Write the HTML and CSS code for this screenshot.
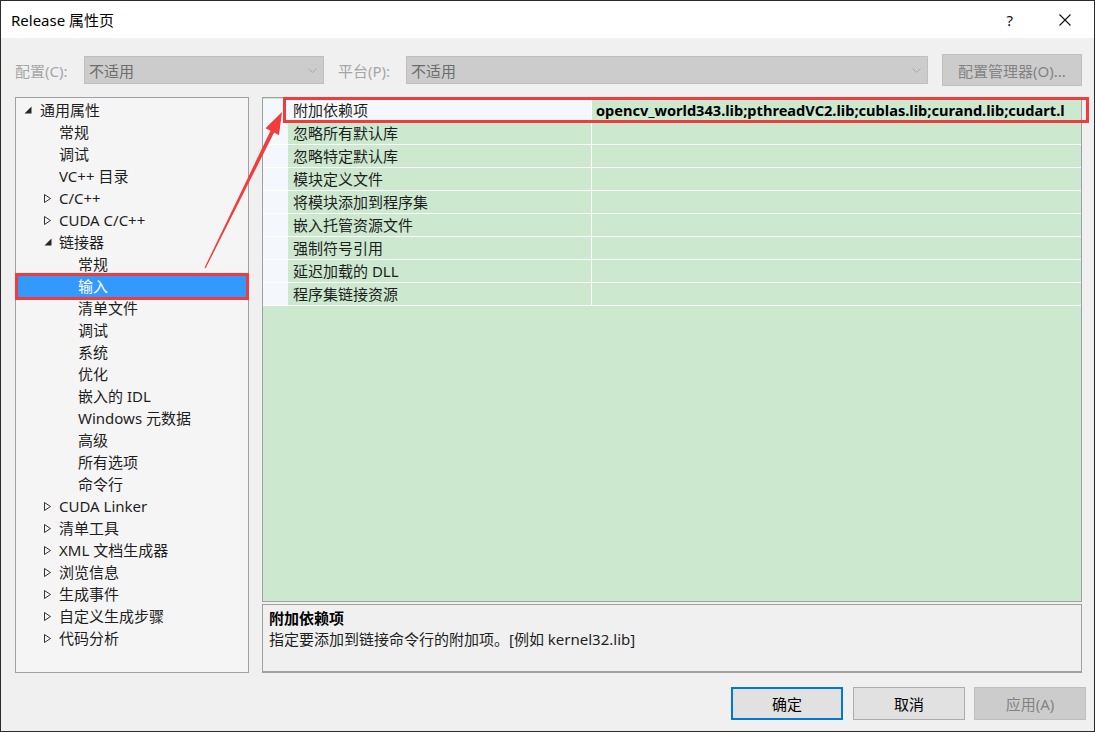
FILE: index.html
```html
<!DOCTYPE html>
<html lang="zh-CN">
<head>
  <meta charset="UTF-8" />
  <title>Release 属性页</title>
  <link rel="stylesheet" href="styles.css">
</head>
<body>
  <div class="window">
    <div class="titlebar">
      <span class="title">Release 属性页</span>
      <span class="help">?</span>
      <svg class="close" width="12" height="12" viewBox="0 0 12 12">
        <path d="M0.5 0.5 L11.5 11.5 M11.5 0.5 L0.5 11.5" stroke="#111" stroke-width="1.1" fill="none" />
      </svg>
    </div>

    <div class="toolbar">
      <span class="tb-label">配置(C):</span>
      <div class="combo combo-config">
        <span>不适用</span>
        <svg width="9" height="5" viewBox="0 0 9 5"><polyline points="0.5,0.5 4.5,4.5 8.5,0.5" stroke="#a8a8a8" fill="none" /></svg>
      </div>
      <span class="tb-label tb-platform">平台(P):</span>
      <div class="combo combo-platform">
        <span>不适用</span>
        <svg width="9" height="5" viewBox="0 0 9 5"><polyline points="0.5,0.5 4.5,4.5 8.5,0.5" stroke="#a8a8a8" fill="none" /></svg>
      </div>
      <button class="btn btn-disabled btn-manager">配置管理器(O)...</button>
    </div>

    <div class="main">
      <div class="tree">
        <div class="node lv0"><svg class="exp" width="16" height="22"><polygon points="0.5,14.5 7.5,7.5 7.5,14.5" fill="#262626" /></svg>通用属性</div>
        <div class="node lv1"><span class="slot"></span>常规</div>
        <div class="node lv1"><span class="slot"></span>调试</div>
        <div class="node lv1"><span class="slot"></span>VC++ 目录</div>
        <div class="node lv1"><svg class="exp" width="16" height="22"><polygon points="1.5,7.5 7.5,11.5 1.5,15.5" fill="none" stroke="#333" /></svg>C/C++</div>
        <div class="node lv1"><svg class="exp" width="16" height="22"><polygon points="1.5,7.5 7.5,11.5 1.5,15.5" fill="none" stroke="#333" /></svg>CUDA C/C++</div>
        <div class="node lv1"><svg class="exp" width="16" height="22"><polygon points="1.5,14.5 8.5,7.5 8.5,14.5" fill="#262626" /></svg>链接器</div>
        <div class="node lv2"><span class="slot"></span>常规</div>
        <div class="node lv2 selected"><span class="slot"></span>输入</div>
        <div class="node lv2"><span class="slot"></span>清单文件</div>
        <div class="node lv2"><span class="slot"></span>调试</div>
        <div class="node lv2"><span class="slot"></span>系统</div>
        <div class="node lv2"><span class="slot"></span>优化</div>
        <div class="node lv2"><span class="slot"></span>嵌入的 IDL</div>
        <div class="node lv2"><span class="slot"></span>Windows 元数据</div>
        <div class="node lv2"><span class="slot"></span>高级</div>
        <div class="node lv2"><span class="slot"></span>所有选项</div>
        <div class="node lv2"><span class="slot"></span>命令行</div>
        <div class="node lv1"><svg class="exp" width="16" height="22"><polygon points="1.5,7.5 7.5,11.5 1.5,15.5" fill="none" stroke="#333" /></svg>CUDA Linker</div>
        <div class="node lv1"><svg class="exp" width="16" height="22"><polygon points="1.5,7.5 7.5,11.5 1.5,15.5" fill="none" stroke="#333" /></svg>清单工具</div>
        <div class="node lv1"><svg class="exp" width="16" height="22"><polygon points="1.5,7.5 7.5,11.5 1.5,15.5" fill="none" stroke="#333" /></svg>XML 文档生成器</div>
        <div class="node lv1"><svg class="exp" width="16" height="22"><polygon points="1.5,7.5 7.5,11.5 1.5,15.5" fill="none" stroke="#333" /></svg>浏览信息</div>
        <div class="node lv1"><svg class="exp" width="16" height="22"><polygon points="1.5,7.5 7.5,11.5 1.5,15.5" fill="none" stroke="#333" /></svg>生成事件</div>
        <div class="node lv1"><svg class="exp" width="16" height="22"><polygon points="1.5,7.5 7.5,11.5 1.5,15.5" fill="none" stroke="#333" /></svg>自定义生成步骤</div>
        <div class="node lv1"><svg class="exp" width="16" height="22"><polygon points="1.5,7.5 7.5,11.5 1.5,15.5" fill="none" stroke="#333" /></svg>代码分析</div>
      </div>

      <div class="right">
        <div class="grid">
          <div class="prop current">
            <span class="gutter"></span>
            <span class="name">附加依赖项</span>
            <span class="value">opencv_world343.lib;pthreadVC2.lib;cublas.lib;curand.lib;cudart.l</span>
          </div>
          <div class="prop"><span class="gutter"></span><span class="name">忽略所有默认库</span><span class="value"></span></div>
          <div class="prop"><span class="gutter"></span><span class="name">忽略特定默认库</span><span class="value"></span></div>
          <div class="prop"><span class="gutter"></span><span class="name">模块定义文件</span><span class="value"></span></div>
          <div class="prop"><span class="gutter"></span><span class="name">将模块添加到程序集</span><span class="value"></span></div>
          <div class="prop"><span class="gutter"></span><span class="name">嵌入托管资源文件</span><span class="value"></span></div>
          <div class="prop"><span class="gutter"></span><span class="name">强制符号引用</span><span class="value"></span></div>
          <div class="prop"><span class="gutter"></span><span class="name">延迟加载的 DLL</span><span class="value"></span></div>
          <div class="prop"><span class="gutter"></span><span class="name">程序集链接资源</span><span class="value"></span></div>
        </div>
        <div class="desc">
          <div class="desc-title">附加依赖项</div>
          <div class="desc-text">指定要添加到链接命令行的附加项。[例如 kernel32.lib]</div>
        </div>
      </div>
    </div>

    <div class="footer">
      <button class="btn btn-default">确定</button>
      <button class="btn btn-cancel">取消</button>
      <button class="btn btn-disabled btn-apply">应用(A)</button>
    </div>
  </div>

  <!-- red annotation marks drawn on top of the screenshot -->
  <div class="mark mark-tree"></div>
  <div class="mark mark-grid"></div>
  <svg class="arrow" width="100" height="180" viewBox="0 0 100 180">
    <polygon points="14.5,167.8 80.5,30.8 75.5,28.2 92,12 89,35.2 84.1,32.6 15.6,168.3" fill="#f23b3b" />
  </svg>
</body>
</html>
```

FILE: styles.css
```css
body {
  margin: 0;
  background-color: #f0f0f0;
  font-family: "Noto Sans", "Noto Sans CJK SC", sans-serif;
  font-size: 15px;
  color: #1e1e1e;
}

.window {
  width: 1095px;
  height: 732px;
  box-sizing: border-box;
  border: 1px solid #2b2b2b;
  background-color: #f0f0f0;
  display: flex;
  flex-direction: column;
}

.titlebar {
  height: 37px;
  flex-shrink: 0;
  background-color: #fff;
  display: flex;
  align-items: center;
  padding: 0 23px 0 10px;
}

.title {
  flex: 1;
  font-size: 15px;
  color: #000;
}

.help {
  font-size: 15px;
  color: #111;
  margin-right: 46px;
}

.close {
  display: block;
}

.toolbar {
  display: flex;
  align-items: center;
  height: 32px;
  margin-top: 16px;
  padding-left: 14px;
}

.tb-label {
  width: 69px;
  color: #a6a6a6;
}

.tb-platform {
  width: 68px;
  margin-left: 14px;
}

.combo {
  height: 28px;
  box-sizing: border-box;
  background-color: #cccccc;
  border: 1px solid #bfbfbf;
  display: flex;
  align-items: center;
  justify-content: space-between;
  padding: 0 6px 0 4px;
  color: #6d6d6d;
}

.combo-config {
  width: 240px;
}

.combo-platform {
  width: 522px;
}

.btn {
  font-family: inherit;
  font-size: 15px;
  box-sizing: border-box;
  width: 112px;
  height: 33px;
  padding: 0;
  background-color: #e1e1e1;
  border: 1px solid #adadad;
  color: #000;
}

.btn-disabled {
  background-color: #cccccc;
  border-color: #bfbfbf;
  color: #838383;
}

.btn-manager {
  width: 140px;
  height: 32px;
  margin-left: 14px;
}

.main {
  display: flex;
  gap: 13px;
  margin-top: 11px;
  padding-left: 14px;
  height: 576px;
}

.tree {
  width: 234px;
  box-sizing: border-box;
  border: 1px solid #a0a0a0;
  background-color: #f5f5f5;
  padding-top: 1px;
}

.node {
  display: flex;
  align-items: center;
  height: 22px;
  line-height: 22px;
  white-space: nowrap;
}

.node .slot,
.node .exp {
  width: 16px;
  height: 22px;
  flex-shrink: 0;
}

.lv0 {
  padding-left: 8px;
}

.lv1 {
  padding-left: 27px;
}

.lv2 {
  padding-left: 46px;
}

.selected {
  background-color: #3399ff;
  color: #fff;
}

.right {
  width: 820px;
  display: flex;
  flex-direction: column;
  gap: 2px;
}

.grid {
  height: 505px;
  box-sizing: border-box;
  border: 1px solid #a0a0a0;
  background-color: #cce8cf;
  padding-top: 1px;
}

.prop {
  display: flex;
  height: 22px;
  line-height: 22px;
  border-bottom: 1px solid #fff;
}

.prop .gutter {
  width: 25px;
  flex-shrink: 0;
  background-color: #f4f7fc;
}

.prop .name {
  width: 304px;
  flex-shrink: 0;
  padding-left: 5px;
  box-sizing: border-box;
  border-right: 1px solid #fff;
  white-space: nowrap;
}

.prop .value {
  flex: 1;
  padding-left: 4px;
  overflow: hidden;
  white-space: nowrap;
}

.current .name {
  background-color: #f4f7fc;
}

.current .value {
  font-size: 14.6px;
  font-weight: bold;
  color: #000;
}

.desc {
  height: 69px;
  box-sizing: border-box;
  border: 1px solid #a0a0a0;
  border-bottom-width: 2px;
  padding: 3px 6px 0;
  background-color: #f0f0f0;
  line-height: 21px;
}

.desc-title {
  font-weight: bold;
  color: #000;
}

.footer {
  display: flex;
  justify-content: flex-end;
  gap: 10px;
  margin-top: 14px;
  padding-right: 8px;
}

.btn-default {
  border: 2px solid #0078d7;
}

.btn-apply {
  margin-left: -1px;
}

.mark {
  position: absolute;
  box-sizing: border-box;
  border: 3px solid #f03c3c;
}

.mark-tree {
  left: 15px;
  top: 273px;
  width: 234px;
  height: 27px;
}

.mark-grid {
  left: 283px;
  top: 97px;
  width: 806px;
  height: 26px;
}

.arrow {
  position: absolute;
  left: 190px;
  top: 100px;
}
```
